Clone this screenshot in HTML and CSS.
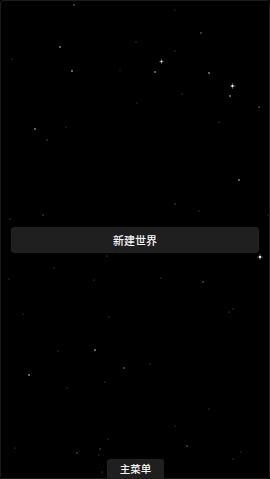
FILE: index.html
```html
<!DOCTYPE html>
<html lang="zh">
<head>
<meta charset="utf-8">
<link rel="stylesheet" href="styles.css">
</head>
<body>
<div class="screen">
  <svg class="stars" width="270" height="479" viewBox="0 0 270 479" xmlns="http://www.w3.org/2000/svg">
    <g fill="#fff">
      <circle cx="74" cy="5" r="0.8" opacity="0.5"/>
      <circle cx="175" cy="10" r="0.5" opacity="0.35"/>
      <circle cx="201" cy="33" r="0.8" opacity="0.5"/>
      <circle cx="136" cy="42" r="0.6" opacity="0.35"/>
      <circle cx="60" cy="47" r="0.9" opacity="0.55"/>
      <circle cx="175" cy="51" r="0.6" opacity="0.35"/>
      <circle cx="12" cy="59" r="0.6" opacity="0.35"/>
      <circle cx="72" cy="71" r="0.9" opacity="0.6"/>
      <circle cx="120" cy="70" r="0.5" opacity="0.3"/>
      <circle cx="155" cy="72" r="0.9" opacity="0.55"/>
      <circle cx="209" cy="73" r="0.9" opacity="0.55"/>
      <circle cx="230" cy="96" r="0.9" opacity="0.55"/>
      <circle cx="182" cy="94" r="0.6" opacity="0.4"/>
      <circle cx="137" cy="103" r="0.6" opacity="0.35"/>
      <circle cx="259" cy="107" r="0.8" opacity="0.5"/>
      <circle cx="35" cy="129" r="0.9" opacity="0.55"/>
      <circle cx="66" cy="127" r="0.6" opacity="0.35"/>
      <circle cx="47" cy="140" r="0.7" opacity="0.4"/>
      <circle cx="219" cy="122" r="0.6" opacity="0.4"/>
      <circle cx="239" cy="180" r="0.9" opacity="0.55"/>
      <circle cx="175" cy="204" r="0.7" opacity="0.4"/>
      <circle cx="199" cy="211" r="0.6" opacity="0.35"/>
      <circle cx="10" cy="219" r="0.6" opacity="0.4"/>
      <circle cx="43" cy="215" r="0.7" opacity="0.4"/>
      <circle cx="268" cy="215" r="0.6" opacity="0.35"/>
      <circle cx="107" cy="256" r="0.6" opacity="0.4"/>
      <circle cx="54" cy="268" r="0.6" opacity="0.35"/>
      <circle cx="9" cy="279" r="0.6" opacity="0.35"/>
      <circle cx="94" cy="280" r="0.6" opacity="0.35"/>
      <circle cx="161" cy="278" r="0.6" opacity="0.35"/>
      <circle cx="203" cy="282" r="0.8" opacity="0.5"/>
      <circle cx="233" cy="309" r="0.6" opacity="0.4"/>
      <circle cx="229" cy="312" r="0.6" opacity="0.4"/>
      <circle cx="23" cy="314" r="0.6" opacity="0.35"/>
      <circle cx="109" cy="317" r="0.6" opacity="0.35"/>
      <circle cx="58" cy="351" r="0.6" opacity="0.4"/>
      <circle cx="95" cy="350" r="0.9" opacity="0.6"/>
      <circle cx="150" cy="364" r="0.6" opacity="0.35"/>
      <circle cx="29" cy="375" r="0.9" opacity="0.6"/>
      <circle cx="124" cy="368" r="0.8" opacity="0.5"/>
      <circle cx="105" cy="382" r="0.6" opacity="0.35"/>
      <circle cx="67" cy="388" r="0.6" opacity="0.35"/>
      <circle cx="209" cy="409" r="0.6" opacity="0.35"/>
      <circle cx="175" cy="426" r="0.6" opacity="0.35"/>
      <circle cx="108" cy="439" r="0.6" opacity="0.35"/>
      <circle cx="15" cy="448" r="0.6" opacity="0.35"/>
      <circle cx="77" cy="453" r="0.7" opacity="0.45"/>
      <circle cx="100" cy="449" r="0.7" opacity="0.45"/>
      <circle cx="187" cy="446" r="0.8" opacity="0.5"/>
      <circle cx="241" cy="452" r="0.6" opacity="0.35"/>
      <circle cx="99" cy="455" r="0.6" opacity="0.4"/>
      <circle cx="233" cy="459" r="0.6" opacity="0.35"/>
      <circle cx="102" cy="472" r="0.6" opacity="0.4"/>
    </g>
    <g fill="#fff">
      <g transform="translate(161.5 61.5)">
        <circle r="1.1" opacity="0.85"/>
        <rect x="-2.5" y="-0.35" width="5" height="0.7" opacity="0.35"/>
        <rect x="-0.35" y="-2.5" width="0.7" height="5" opacity="0.35"/>
      </g>
      <g transform="translate(232.5 86)">
        <circle r="1.2" opacity="0.9"/>
        <rect x="-3" y="-0.35" width="6" height="0.7" opacity="0.4"/>
        <rect x="-0.35" y="-3" width="0.7" height="6" opacity="0.4"/>
      </g>
      <g transform="translate(260 257)">
        <circle r="1.2" opacity="0.9"/>
        <rect x="-3" y="-0.35" width="6" height="0.7" opacity="0.4"/>
        <rect x="-0.35" y="-3" width="0.7" height="6" opacity="0.4"/>
      </g>
    </g>
  </svg>
  <div class="top"></div>
  <button class="btn-new">新建世界</button>
  <div class="bottom">
    <button class="btn-menu">主菜单</button>
  </div>
</div>
</body>
</html>
```

FILE: styles.css
```css
html, body {
  margin: 0;
  padding: 0;
  background: #000;
}
.screen {
  position: relative;
  width: 270px;
  height: 479px;
  box-sizing: border-box;
  border: 1px solid #1c1c1c;
  border-radius: 3px;
  background: #000;
  overflow: hidden;
  display: grid;
  grid-template-rows: 1fr auto 1fr;
  font-family: "Noto Sans CJK SC", "Noto Sans", sans-serif;
}
.stars {
  position: absolute;
  left: -1px;
  top: -1px;
  pointer-events: none;
}
.btn-new {
  position: relative;
  margin: 0 10px;
  height: 26px;
  border: none;
  border-radius: 3px;
  background: #1f1f1f;
  color: #f5f5f5;
  font-family: inherit;
  font-size: 11px;
  font-weight: 500;
  line-height: 26px;
  padding: 0;
}
.bottom {
  display: flex;
  justify-content: center;
  align-items: flex-end;
}
.btn-menu {
  position: relative;
  width: 57px;
  height: 19px;
  margin-left: 1px;
  border: none;
  border-radius: 3px 3px 0 0;
  background: #1f1f1f;
  color: #f5f5f5;
  font-family: inherit;
  font-size: 10.5px;
  font-weight: 500;
  line-height: 19px;
  padding: 0;
}
```
